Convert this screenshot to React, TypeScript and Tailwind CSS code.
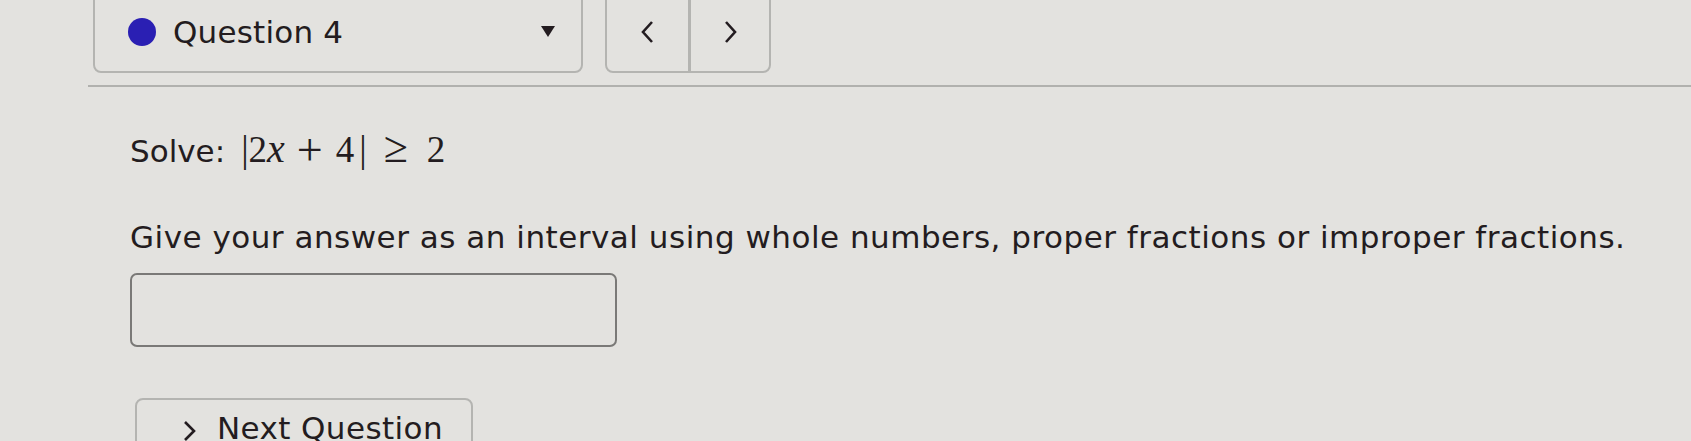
import React from 'react';

const sans = { fontFamily: '"DejaVu Sans", Verdana, sans-serif' };

const QuestionHeader: React.FC = () => (
  <div className="flex items-start gap-[22px] pl-[93px] -mt-[10px]">
    {/* Question selector */}
    <div className="w-[490px] h-[83px] border-2 border-[#b4b4b1] rounded-[8px] flex items-center pl-[33px] pr-[26px]">
      <span className="w-[28px] h-[28px] rounded-full bg-[#2a1fb3] shrink-0" />
      <span className="ml-[17px] text-[31px] leading-[40px] tracking-[0.2px]">Question 4</span>
      <svg className="ml-auto w-[14px] h-[11px]" viewBox="0 0 14 11">
        <path d="M0 0 H14 L7 11 Z" fill="#231c20" />
      </svg>
    </div>

    {/* Prev / next */}
    <div className="w-[166px] h-[83px] border-2 border-[#b4b4b1] rounded-[8px] flex">
      <button className="w-[81px] h-full flex items-center justify-center">
        <svg className="w-[13px] h-[24px]" viewBox="0 0 13 24" fill="none" stroke="#231c20" strokeWidth="2.6">
          <polyline points="11 2 2 12 11 22" />
        </svg>
      </button>
      <div className="w-[3px] h-full bg-[#b4b4b1]" />
      <button className="flex-1 h-full flex items-center justify-center">
        <svg className="w-[13px] h-[24px]" viewBox="0 0 13 24" fill="none" stroke="#231c20" strokeWidth="2.6">
          <polyline points="2 2 11 12 2 22" />
        </svg>
      </button>
    </div>
  </div>
);

const MathExpr: React.FC = () => (
  <span
    className="text-[37px] leading-[40px] flex items-baseline"
    style={{ fontFamily: '"Liberation Serif", "Times New Roman", serif' }}
  >
    <span>|</span>
    <span>2</span>
    <span className="italic text-[40px]">x</span>
    <span className="ml-[12px] text-[46px] leading-[40px] relative top-[3px]">+</span>
    <span className="ml-[13px]">4</span>
    <span className="ml-[5px]">|</span>
    <span className="ml-[17px] text-[44px] leading-[40px]">≥</span>
    <span className="ml-[19px]">2</span>
  </span>
);

export default function App() {
  return (
    <div className="w-full h-[441px] overflow-hidden bg-[#e3e2df] text-[#231c20]" style={sans}>
      <QuestionHeader />

      {/* divider */}
      <div className="mt-[12px] ml-[88px] h-[2px] bg-[#b1b1ae]" />

      <div className="pl-[130px]">
        <div className="mt-[40px] h-[40px] flex items-baseline gap-[16px]">
          <span className="text-[31px] leading-[40px]">Solve:</span>
          <MathExpr />
        </div>

        <p className="mt-[50px] text-[31px] leading-[40px] tracking-[0.5px]">
          Give your answer as an interval using whole numbers, proper fractions or improper fractions.
        </p>

        <input
          type="text"
          aria-label="answer"
          className="mt-[16px] block w-[487px] h-[74px] border-2 border-[#7a7977] rounded-[7px] bg-transparent outline-none"
        />

        <button className="mt-[51px] ml-[5px] w-[338px] h-[70px] border-2 border-[#b4b4b1] rounded-[8px] flex items-start pt-[8px] pl-[46px]">
          <svg className="mt-[12px] w-[13px] h-[22px] shrink-0" viewBox="0 0 13 22" fill="none" stroke="#231c20" strokeWidth="2.6">
            <polyline points="2 2 11 11 2 20" />
          </svg>
          <span className="ml-[21px] text-[31px] leading-[40px] tracking-[0.4px] whitespace-nowrap">Next Question</span>
        </button>
      </div>
    </div>
  );
}
